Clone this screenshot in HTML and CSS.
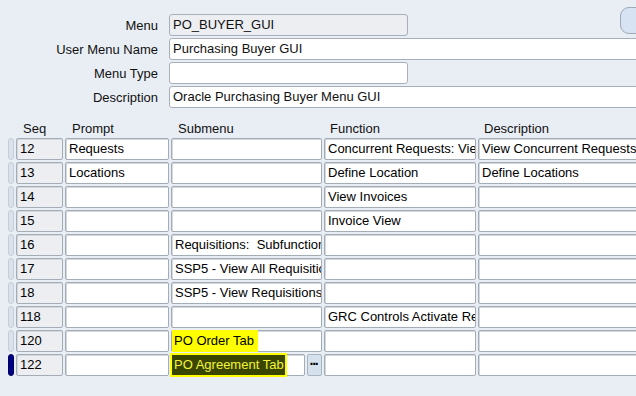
FILE: index.html
```html
<!DOCTYPE html>
<html lang="en">
<head>
    <meta charset="UTF-8">
    <title>Menus</title>
    <link rel="stylesheet" href="styles.css">
</head>
<body>
    <div class="form">
        <div class="field-row">
            <label>Menu</label>
            <div class="field short readonly">PO_BUYER_GUI</div>
            <div class="corner-btn"></div>
        </div>
        <div class="field-row">
            <label>User Menu Name</label>
            <div class="field long">Purchasing Buyer GUI</div>
        </div>
        <div class="field-row">
            <label>Menu Type</label>
            <div class="field short"></div>
        </div>
        <div class="field-row">
            <label>Description</label>
            <div class="field long">Oracle Purchasing Buyer Menu GUI</div>
        </div>
    </div>

    <div class="grid">
        <div class="head"></div>
        <div class="head">Seq</div>
        <div class="head">Prompt</div>
        <div class="head">Submenu</div>
        <div class="head">Function</div>
        <div class="head">Description</div>

        <div class="ind"></div><div class="cell seq">12</div><div class="cell">Requests</div><div class="cell"></div><div class="cell">Concurrent Requests: View</div><div class="cell">View Concurrent Requests</div>
        <div class="ind"></div><div class="cell seq">13</div><div class="cell">Locations</div><div class="cell"></div><div class="cell">Define Location</div><div class="cell">Define Locations</div>
        <div class="ind"></div><div class="cell seq">14</div><div class="cell"></div><div class="cell"></div><div class="cell">View Invoices</div><div class="cell"></div>
        <div class="ind"></div><div class="cell seq">15</div><div class="cell"></div><div class="cell"></div><div class="cell">Invoice View</div><div class="cell"></div>
        <div class="ind"></div><div class="cell seq">16</div><div class="cell"></div><div class="cell">Requisitions:&nbsp; Subfunctions</div><div class="cell"></div><div class="cell"></div>
        <div class="ind"></div><div class="cell seq">17</div><div class="cell"></div><div class="cell">SSP5 - View All Requisitions</div><div class="cell"></div><div class="cell"></div>
        <div class="ind"></div><div class="cell seq">18</div><div class="cell"></div><div class="cell">SSP5 - View Requisitions</div><div class="cell"></div><div class="cell"></div>
        <div class="ind"></div><div class="cell seq">118</div><div class="cell"></div><div class="cell"></div><div class="cell">GRC Controls Activate Requests</div><div class="cell"></div>
        <div class="ind"></div><div class="cell seq">120</div><div class="cell"></div><div class="cell hl-cell"><span class="hl">PO Order Tab</span></div><div class="cell"></div><div class="cell"></div>
        <div class="ind current"></div><div class="cell seq">122</div><div class="cell"></div>
        <div class="lov-wrap">
            <div class="cell hl-cell"><span class="hl selected">PO Agreement Tab</span></div>
            <div class="lov-btn">&middot;&middot;&middot;</div>
        </div>
        <div class="cell"></div><div class="cell"></div>
    </div>
</body>
</html>
```

FILE: styles.css
```css
body {
    margin: 0;
    background: #e9eef5;
    font-family: "Liberation Sans", Arial, sans-serif;
    font-size: 13px;
    color: #111;
    overflow: hidden;
    height: 396px;
}
.form {
    padding-top: 14px;
    display: flex;
    flex-direction: column;
    gap: 2px;
}
.field-row {
    display: flex;
    align-items: center;
    height: 22px;
}
.field-row label {
    flex-shrink: 0;
    width: 158px;
    text-align: right;
    margin-right: 11px;
}
.field {
    box-sizing: border-box;
    height: 22px;
    line-height: 20px;
    padding-left: 3px;
    background: #fff;
    border: 1px solid #a7b0ba;
    border-radius: 3px;
    white-space: nowrap;
    overflow: hidden;
}
.field.short {
    flex-shrink: 0;
    width: 239px;
}
.field.long {
    width: 480px;
    flex-shrink: 0;
}
.field.readonly {
    background: #eceef1;
}
.corner-btn {
    box-sizing: border-box;
    flex-shrink: 0;
    width: 32px;
    height: 27px;
    margin: -14px -16px 0 auto;
    align-self: flex-start;
    position: relative;
    top: 7px;
    background: #d7e3f2;
    border: 1px solid #9ea9b6;
    border-radius: 9px;
}
.grid {
    display: grid;
    grid-template-columns: 6px 47px 104px 151px 152px 200px;
    grid-auto-rows: 22px;
    grid-template-rows: 15px;
    row-gap: 2px;
    column-gap: 2px;
    margin: 13px 0 0 8px;
}
.head {
    padding-left: 7px;
    line-height: 15px;
    white-space: nowrap;
}
.grid .head:nth-child(5),
.grid .head:nth-child(6) {
    padding-left: 6px;
}
.ind {
    box-sizing: border-box;
    background: #dbe2eb;
    border: 1px solid #c5cdd8;
    border-radius: 3px;
}
.ind.current {
    background: #000084;
    border-color: #000060;
}
.cell {
    box-sizing: border-box;
    height: 22px;
    line-height: 20px;
    padding-left: 3px;
    background: #fff;
    border: 1px solid #a4acb6;
    box-shadow: inset 1px 1px 0 #d3d8de;
    border-radius: 2px;
    white-space: nowrap;
    overflow: hidden;
    color: #000;
}
.cell.seq {
    background: #eceef1;
}
.cell.hl-cell {
    padding-left: 0;
    overflow: visible;
}
.hl {
    display: inline-block;
    background: #ffff00;
    padding: 0 4px 0 2px;
    margin-top: -1px;
    line-height: 22px;
}
.hl.selected {
    background: #3a4600;
    color: #f4f43c;
    margin-top: 0;
    line-height: 20px;
    padding: 0 1px 0 2px;
    box-shadow: 0 0 0 2px #ffff00;
}
.lov-wrap {
    display: flex;
    gap: 2px;
}
.lov-wrap .cell {
    width: 135px;
}
.lov-btn {
    box-sizing: border-box;
    width: 15px;
    height: 22px;
    background: #d6e1ee;
    border: 1px solid #a9b4c1;
    border-radius: 2px;
    color: #000;
    font-weight: bold;
    font-size: 14px;
    line-height: 19px;
    text-align: center;
    letter-spacing: -2px;
    text-indent: -2px;
}
```
